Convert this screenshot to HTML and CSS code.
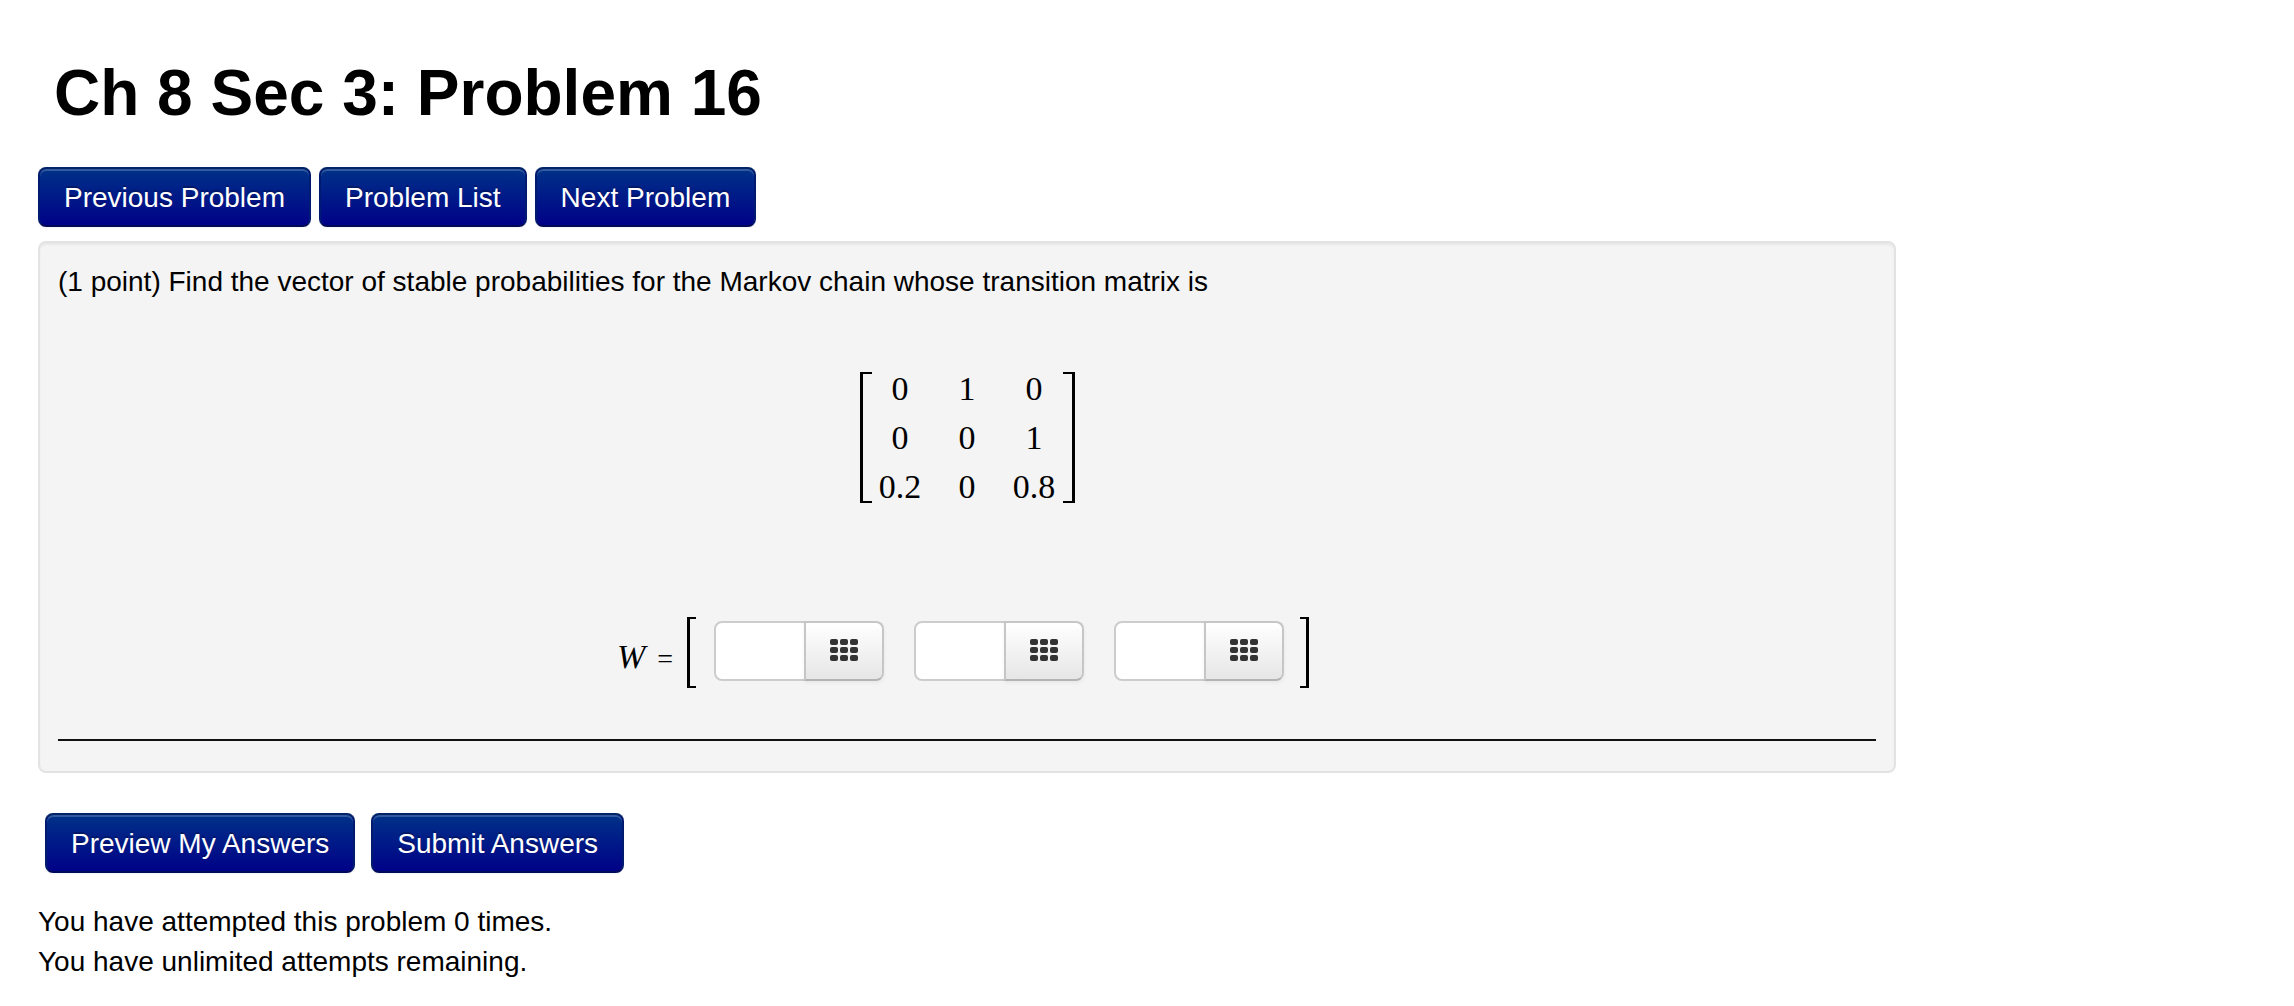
FILE: index.html
```
<!DOCTYPE html>
<html lang="en">
<head>
    <meta charset="UTF-8">
    <meta name="viewport" content="width=device-width, initial-scale=1.0">
    <title>Ch 8 Sec 3: Problem 16</title>
    <link rel="stylesheet" href="styles.css">
</head>
<body>
    <!-- keypad icon shared by the answer boxes -->
    <svg class="defs" width="0" height="0" aria-hidden="true">
        <symbol id="keypad" viewBox="0 0 28 22">
            <rect x="0" y="0" width="8" height="6" rx="2"/>
            <rect x="10" y="0" width="8" height="6" rx="2"/>
            <rect x="20" y="0" width="8" height="6" rx="2"/>
            <rect x="0" y="8" width="8" height="6" rx="2"/>
            <rect x="10" y="8" width="8" height="6" rx="2"/>
            <rect x="20" y="8" width="8" height="6" rx="2"/>
            <rect x="0" y="16" width="8" height="6" rx="2"/>
            <rect x="10" y="16" width="8" height="6" rx="2"/>
            <rect x="20" y="16" width="8" height="6" rx="2"/>
        </symbol>
    </svg>

    <main class="page">
        <h1>Ch 8 Sec 3: Problem 16</h1>
        <nav class="problem-nav">
            <a class="btn" href="#">Previous Problem</a>
            <a class="btn" href="#">Problem List</a>
            <a class="btn" href="#">Next Problem</a>
        </nav>

        <form>
            <div class="problem">
                <p>(1 point) Find the vector of stable probabilities for the Markov chain whose transition matrix is</p>
                <div class="matrix bracket">
                    <table>
                        <tr><td>0</td><td>1</td><td>0</td></tr>
                        <tr><td>0</td><td>0</td><td>1</td></tr>
                        <tr><td>0.2</td><td>0</td><td>0.8</td></tr>
                    </table>
                </div>
                <div class="answer">
                    <div class="lhs"><i>W</i> <span>=</span></div>
                    <div class="vector bracket">
                        <div class="entry">
                            <input type="text" aria-label="answer 1" autocomplete="off">
                            <button type="button" aria-label="equation editor 1"><svg><use href="#keypad"/></svg></button>
                        </div>
                        <div class="entry">
                            <input type="text" aria-label="answer 2" autocomplete="off">
                            <button type="button" aria-label="equation editor 2"><svg><use href="#keypad"/></svg></button>
                        </div>
                        <div class="entry">
                            <input type="text" aria-label="answer 3" autocomplete="off">
                            <button type="button" aria-label="equation editor 3"><svg><use href="#keypad"/></svg></button>
                        </div>
                    </div>
                </div>
                <hr>
            </div>
            <div class="submit-buttons">
                <button class="btn" type="button">Preview My Answers</button>
                <button class="btn" type="button">Submit Answers</button>
            </div>
        </form>

        <p>You have attempted this problem 0 times.</p>
        <p>You have unlimited attempts remaining.</p>
    </main>
</body>
</html>
```

FILE: styles.css
```
*, *::before, *::after{
    box-sizing: border-box;
}
body{
    margin: 0;
    background-color: #fff;
    color: #000;
    font-family: "Helvetica Neue", Helvetica, "Liberation Sans", Arial, sans-serif;
    font-size: 28px;
    line-height: 40px;
}
.defs{
    position: absolute;
}
.page{
    width: 81%;
    margin-left: 38px;
    padding: 53px 0 24px;
}
h1{
    margin: 0 0 34px;
    padding-left: 16px;
    font-size: 64px;
    line-height: 80px;
}
p{
    margin: 0;
}

/* buttons */
.btn{
    height: 60px;
    padding: 9px 24px 7px;
    border: 2px solid;
    border-color: #002266 #001a70 #000a58;
    border-radius: 8px;
    background: linear-gradient(#003388, #000088) border-box;
    box-shadow: inset 0 2px 0 rgba(255, 255, 255, .2), 0 1px 2px rgba(0, 0, 0, .05);
    color: #fff;
    font: inherit;
    text-decoration: none;
    text-shadow: 0 -2px 0 rgba(0, 0, 0, .25);
    cursor: pointer;
}
.problem-nav{
    display: flex;
    gap: 8px;
    margin-bottom: 14px;
}
.submit-buttons{
    display: flex;
    gap: 16px;
    margin: 40px 7px 29px;
}

/* problem box */
.problem{
    display: flex;
    flex-direction: column;
    align-items: center;
    padding: 19px 18px 30px;
    border: 2px solid #e3e3e3;
    border-radius: 8px;
    background-color: #f4f4f4;
    box-shadow: inset 0 2px 2px rgba(0, 0, 0, .05);
}
.problem p, hr{
    align-self: stretch;
}
hr{
    height: 2px;
    margin: 51px 0 0;
    border: 0;
    background-color: #111;
}

/* square brackets on both sides of the content */
.bracket{
    display: flex;
    align-items: center;
}
.bracket::before, .bracket::after{
    content: "";
    align-self: stretch;
    width: 12px;
    border: 2px solid #000;
}
.bracket::before{
    border-left-width: 3px;
    border-right: 0;
}
.bracket::after{
    border-right-width: 3px;
    border-left: 0;
}
.matrix{
    height: 131px;
    margin: 70px 0 114px;
    font-family: "Liberation Serif", "Times New Roman", serif;
    font-size: 34px;
}
.matrix table{
    margin: 0 -5px;
    border-collapse: collapse;
    line-height: 49px;
    text-align: center;
}
.matrix td{
    width: 67px;
    padding: 0;
}

/* answer row */
.answer{
    display: flex;
    align-items: center;
    margin-right: 8px;
}
.lhs{
    display: flex;
    align-items: baseline;
    gap: 12px;
    margin-right: 14px;
    padding-top: 10px;
    font-family: "Liberation Serif", "Times New Roman", serif;
}
.lhs i{
    font-size: 34px;
}
.vector{
    height: 71px;
    gap: 30px;
}
.vector::before, .vector::after{
    width: 9px;
}
.vector::before{
    margin-right: -12px;
}
.vector::after{
    margin-left: -14px;
}
.entry{
    display: flex;
    width: 170px;
    height: 60px;
    margin-bottom: 3px;
}
.entry input{
    width: 92px;
    padding: 8px 12px;
    border: 2px solid #ccc;
    border-radius: 8px 0 0 8px;
    background-color: #fff;
    font: inherit;
}
.entry button{
    display: flex;
    align-items: center;
    justify-content: center;
    flex: 1;
    margin-left: -2px;
    padding: 0 0 2px;
    border: 2px solid #c6c6c6;
    border-bottom-color: #b3b3b3;
    border-radius: 0 8px 8px 0;
    background: linear-gradient(#fff, #e6e6e6);
    box-shadow: 0 2px 4px rgba(0, 0, 0, .05);
    cursor: pointer;
}
.entry svg{
    width: 28px;
    height: 22px;
    fill: #333;
}
```
